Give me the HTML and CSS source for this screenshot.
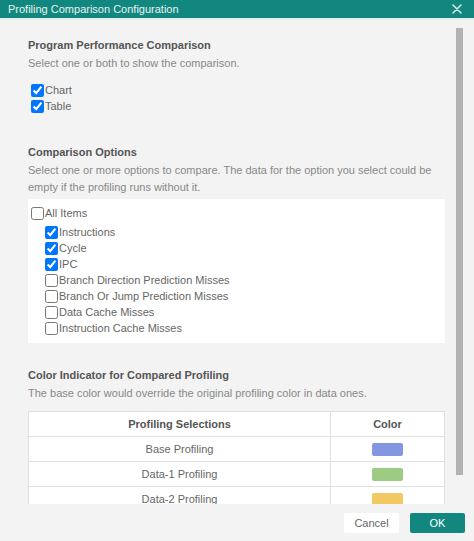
FILE: index.html
```html
<!doctype html>
<html lang="en">
<head>
	<meta charset="utf-8" />
	<title>Profiling Comparison Configuration</title>
	<link rel="stylesheet" href="styles.css">
</head>
<body>

	<!-- BEGIN: Dialog. -->
	<section class="dialog">
		<header class="dialog__title">
			<span>Profiling Comparison Configuration</span>
			<svg class="dialog__close" width="10" height="10" viewBox="0 0 10 10">
				<path d="M1 1 L9 9 M9 1 L1 9" stroke="currentColor" stroke-width="1.6" stroke-linecap="round" />
			</svg>
		</header>

		<div class="dialog__main">
			<div class="dialog__scroll">

				<div class="group">
					<h2 class="group__title">Program Performance Comparison</h2>
					<p class="group__desc">Select one or both to show the comparison.</p>
					<ul class="checks checks--top">
						<li><label><input type="checkbox" checked> Chart</label></li>
						<li><label><input type="checkbox" checked> Table</label></li>
					</ul>
				</div>

				<div class="group group--options">
					<h2 class="group__title">Comparison Options</h2>
					<p class="group__desc">Select one or more options to compare. The data for the option you select could be empty if the profiling runs without it.</p>
					<div class="options">
						<label class="options__all"><input type="checkbox"> All Items</label>
						<ul class="checks checks--nested">
							<li><label><input type="checkbox" checked> Instructions</label></li>
							<li><label><input type="checkbox" checked> Cycle</label></li>
							<li><label><input type="checkbox" checked> IPC</label></li>
							<li><label><input type="checkbox"> Branch Direction Prediction Misses</label></li>
							<li><label><input type="checkbox"> Branch Or Jump Prediction Misses</label></li>
							<li><label><input type="checkbox"> Data Cache Misses</label></li>
							<li><label><input type="checkbox"> Instruction Cache Misses</label></li>
						</ul>
					</div>
				</div>

				<div class="group group--colors">
					<h2 class="group__title">Color Indicator for Compared Profiling</h2>
					<p class="group__desc">The base color would override the original profiling color in data ones.</p>
					<table class="colors">
						<thead>
							<tr>
								<th class="colors__name">Profiling Selections</th>
								<th>Color</th>
							</tr>
						</thead>
						<tbody>
							<tr>
								<td>Base Profiling</td>
								<td><span class="swatch swatch--base"></span></td>
							</tr>
							<tr>
								<td>Data-1 Profiling</td>
								<td><span class="swatch swatch--data1"></span></td>
							</tr>
							<tr>
								<td>Data-2 Profiling</td>
								<td><span class="swatch swatch--data2"></span></td>
							</tr>
						</tbody>
					</table>
				</div>

			</div>
			<div class="scrollbar">
				<div class="scrollbar__thumb"></div>
			</div>
		</div>

		<footer class="dialog__footer">
			<button class="button">Cancel</button>
			<button class="button button--primary">OK</button>
		</footer>
	</section>
	<!-- END: Dialog. -->

</body>
</html>
```

FILE: styles.css
```css
html {
	box-sizing: border-box ;
}

*, *:before, *:after {
	box-sizing: inherit ;
}

body {
	margin: 0px ;
	font-family: "Liberation Sans", Arial, sans-serif ;
	font-size: 11px ;
	color: #666666 ;
}

/* BEGIN: Dialog. */
.dialog {
	background-color: #f3f3f3 ;
	display: flex ;
	flex-direction: column ;
	height: 541px ;
	overflow: hidden ;
}

.dialog__title {
	align-items: center ;
	background-color: #12877f ;
	border-bottom: 2px solid #e4efee ;
	color: #e6f2f1 ;
	display: flex ;
	flex: 0 0 auto ;
	font-size: 11px ;
	height: 20px ;
	justify-content: space-between ;
	line-height: 18px ;
	padding: 0px 12px 0px 8px ;
}

.dialog__close {
	color: #cfe9e6 ;
}

.dialog__main {
	display: flex ;
	flex: 0 0 auto ;
	height: 484px ;
}

.dialog__scroll {
	flex: 1 1 auto ;
	overflow: hidden ;
	padding: 17px 11px 0px 28px ;
}

.scrollbar {
	flex: 0 0 auto ;
	margin: 8px 11px 0px 0px ;
	width: 7px ;
}

.scrollbar__thumb {
	background-color: #b3b3b3 ;
	height: 447px ;
}

.dialog__footer {
	display: flex ;
	flex: 1 1 auto ;
	gap: 11px ;
	justify-content: flex-end ;
	padding: 9px 9px 0px 0px ;
}
/* END: Dialog. */

/* BEGIN: Groups. */
.group__title {
	color: #555555 ;
	font-size: 11px ;
	font-weight: bold ;
	line-height: 16px ;
	margin: 0px 0px 2px 0px ;
}

.group__desc {
	color: #888888 ;
	line-height: 17px ;
	margin: 0px ;
}

.group--options {
	margin-top: 30px ;
}

.group--colors {
	margin-top: 24px ;
}

.checks {
	list-style: none ;
	margin: 0px ;
	padding: 0px ;
}

.checks--top {
	margin-top: 10px ;
}

.checks li,
.options__all {
	display: flex ;
	height: 16px ;
	line-height: 16px ;
}

.checks label,
.options__all {
	align-items: center ;
	display: flex ;
}

.checks input,
.options__all input {
	height: 13px ;
	margin: 0px 1px 0px 3px ;
	width: 13px ;
}

.options {
	background-color: #ffffff ;
	margin-top: 3px ;
	padding: 6px 0px 7px 0px ;
}

.checks--nested {
	margin-top: 3px ;
	padding-left: 14px ;
}
/* END: Groups. */

/* BEGIN: Colors table. */
.colors {
	background-color: #ffffff ;
	border-collapse: collapse ;
	margin-top: 9px ;
	width: 100% ;
}

.colors th,
.colors td {
	border: 1px solid #e0e0e0 ;
	height: 25px ;
	padding: 0px ;
	text-align: center ;
}

.colors th {
	color: #555555 ;
	font-weight: bold ;
}

.colors__name {
	width: 302px ;
}

.swatch {
	border-radius: 2px ;
	display: inline-block ;
	height: 13px ;
	vertical-align: middle ;
	width: 31px ;
}

.swatch--base {
	background-color: #8596e0 ;
}

.swatch--data1 {
	background-color: #9ccb83 ;
}

.swatch--data2 {
	background-color: #f1c862 ;
}
/* END: Colors table. */

/* BEGIN: Buttons. */
.button {
	background-color: #ffffff ;
	border: none ;
	border-radius: 2px ;
	color: #666666 ;
	font-family: inherit ;
	font-size: 11px ;
	height: 20px ;
	padding: 0px ;
	width: 55px ;
}

.button--primary {
	background-color: #12877f ;
	color: #ffffff ;
}
/* END: Buttons. */
```
